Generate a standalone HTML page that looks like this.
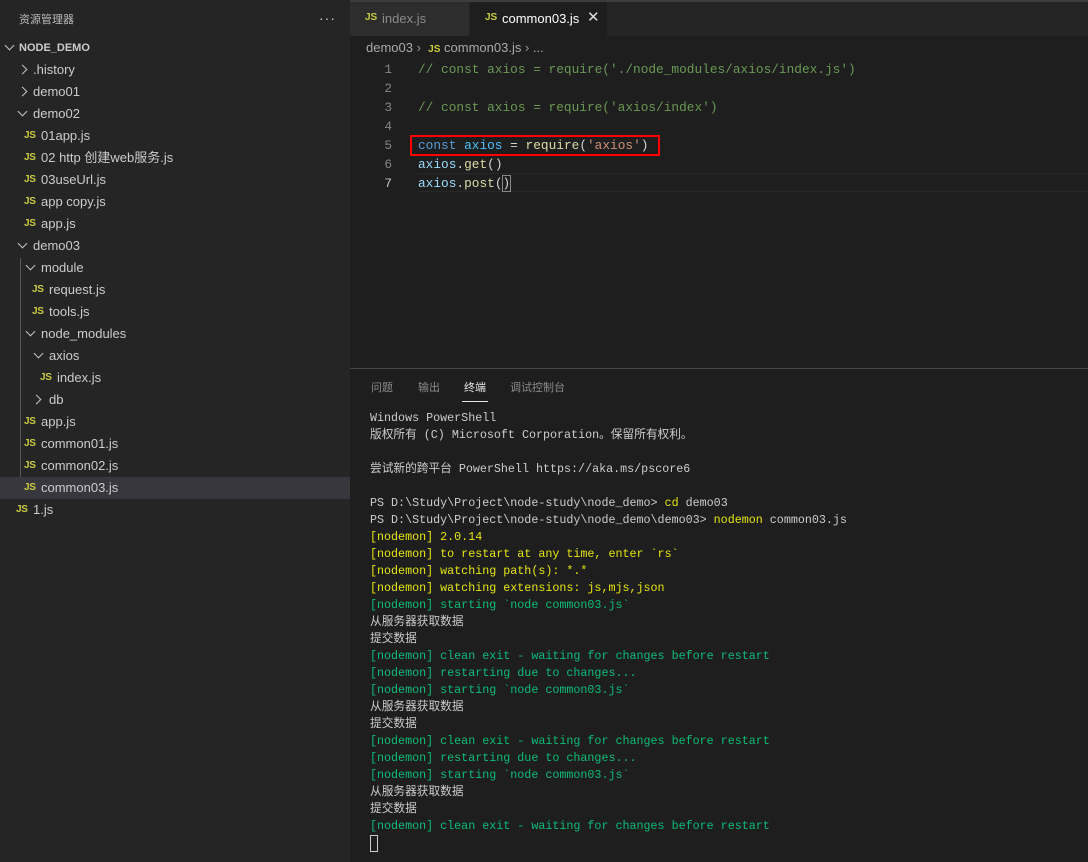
<!DOCTYPE html>
<html><head><meta charset="utf-8"><style>
*{margin:0;padding:0;box-sizing:border-box}
body{width:1088px;height:862px;background:#1e1e1e;position:relative;overflow:hidden;font-family:"Liberation Sans","Noto Sans CJK SC",sans-serif;color:#ccc;font-size:13px}
.a{position:absolute;white-space:pre}
.side{position:absolute;left:0;top:0;width:350px;height:862px;background:#252526}
.row{position:absolute;height:22px;line-height:22px;font-size:13px;color:#ccc;white-space:pre}
.js{position:absolute;font-weight:bold;font-size:10px;color:#cbcb41;letter-spacing:-0.3px;top:0;line-height:22px}
.chev{position:absolute;top:7px;width:7px;height:7px;border-right:1.2px solid #c5c5c5;border-bottom:1.2px solid #c5c5c5}
.dn{transform:rotate(45deg);top:5px}
.rt{transform:rotate(-45deg)}
.code{position:absolute;font-family:"Liberation Mono",monospace;font-size:12.8px;line-height:19px;white-space:pre}
.term{position:absolute;left:370px;top:410px;font-family:"Liberation Mono","Noto Sans CJK SC",monospace;font-size:11.7px;line-height:17px;white-space:pre;color:#ccc}
.y{color:#e5e510}.g{color:#0dbc79}
</style></head><body>
<div class="a" style="left:0;top:0;width:1088px;height:2px;background:#3c3c3c"></div>
<div class="side">
<div class="a" style="left:19px;top:11px;font-size:11px;color:#bbb">资源管理器</div>
<div class="a" style="left:319px;top:10px;font-size:14px;color:#ccc;letter-spacing:1px">···</div>
<div class="row" style="left:0;top:37px;width:350px;font-weight:bold;font-size:11px"><span class="chev dn" style="left:6px"></span><span style="position:absolute;left:19px">NODE_DEMO</span></div>
<div class="a" style="left:20px;top:258px;width:1px;height:241px;background:#585858"></div>
<div class="row" style="left:0;top:477px;width:350px;height:22px;background:#37373d"></div>
<div class="row" style="top:59px;left:0"><span class="chev rt" style="left:19px"></span><span style="position:absolute;left:33px">.history</span></div>
<div class="row" style="top:81px;left:0"><span class="chev rt" style="left:19px"></span><span style="position:absolute;left:33px">demo01</span></div>
<div class="row" style="top:103px;left:0"><span class="chev dn" style="left:19px"></span><span style="position:absolute;left:33px">demo02</span></div>
<div class="row" style="top:125px;left:0;width:300px"><span class="js" style="left:24px">JS</span><span style="position:absolute;left:41px">01app.js</span></div>
<div class="row" style="top:147px;left:0;width:300px"><span class="js" style="left:24px">JS</span><span style="position:absolute;left:41px">02 http 创建web服务.js</span></div>
<div class="row" style="top:169px;left:0;width:300px"><span class="js" style="left:24px">JS</span><span style="position:absolute;left:41px">03useUrl.js</span></div>
<div class="row" style="top:191px;left:0;width:300px"><span class="js" style="left:24px">JS</span><span style="position:absolute;left:41px">app copy.js</span></div>
<div class="row" style="top:213px;left:0;width:300px"><span class="js" style="left:24px">JS</span><span style="position:absolute;left:41px">app.js</span></div>
<div class="row" style="top:235px;left:0"><span class="chev dn" style="left:19px"></span><span style="position:absolute;left:33px">demo03</span></div>
<div class="row" style="top:257px;left:0"><span class="chev dn" style="left:27px"></span><span style="position:absolute;left:41px">module</span></div>
<div class="row" style="top:279px;left:0;width:300px"><span class="js" style="left:32px">JS</span><span style="position:absolute;left:49px">request.js</span></div>
<div class="row" style="top:301px;left:0;width:300px"><span class="js" style="left:32px">JS</span><span style="position:absolute;left:49px">tools.js</span></div>
<div class="row" style="top:323px;left:0;width:300px"><span class="chev dn" style="left:27px"></span><span style="position:absolute;left:41px">node_modules</span></div>
<div class="row" style="top:345px;left:0"><span class="chev dn" style="left:35px"></span><span style="position:absolute;left:49px">axios</span></div>
<div class="row" style="top:367px;left:0;width:300px"><span class="js" style="left:40px">JS</span><span style="position:absolute;left:57px">index.js</span></div>
<div class="row" style="top:389px;left:0"><span class="chev rt" style="left:33px"></span><span style="position:absolute;left:49px">db</span></div>
<div class="row" style="top:411px;left:0;width:300px"><span class="js" style="left:24px">JS</span><span style="position:absolute;left:41px">app.js</span></div>
<div class="row" style="top:433px;left:0;width:300px"><span class="js" style="left:24px">JS</span><span style="position:absolute;left:41px">common01.js</span></div>
<div class="row" style="top:455px;left:0;width:300px"><span class="js" style="left:24px">JS</span><span style="position:absolute;left:41px">common02.js</span></div>
<div class="row" style="top:477px;left:0;width:300px"><span class="js" style="left:24px">JS</span><span style="position:absolute;left:41px">common03.js</span></div>
<div class="row" style="top:499px;left:0;width:300px"><span class="js" style="left:16px">JS</span><span style="position:absolute;left:33px">1.js</span></div>
</div>
<div class="a" style="left:350px;top:2px;width:738px;height:34px;background:#252526"></div>
<div class="a" style="left:350px;top:2px;width:119px;height:34px;background:#2d2d2d"></div>
<div class="a" style="left:470px;top:2px;width:137px;height:34px;background:#1e1e1e"></div>
<div class="a" style="left:365px;top:12px;font-size:10px;font-weight:bold;color:#cbcb41">JS</div>
<div class="a" style="left:382px;top:11px;color:#8b8b8b">index.js</div>
<div class="a" style="left:485px;top:12px;font-size:10px;font-weight:bold;color:#cbcb41">JS</div>
<div class="a" style="left:502px;top:11px;color:#fff">common03.js</div>
<div class="a" style="left:587px;top:8px;font-size:15px;color:#ddd">✕</div>
<div class="a" style="left:366px;top:40px;color:#a9a9a9">demo03 <span style="color:#999">›</span>  <span style="font-size:10px;font-weight:bold;color:#cbcb41">JS</span> common03.js <span style="color:#999">›</span> ...</div>
<div class="code" style="left:370px;top:60px;width:22px;text-align:right;color:#858585">1
2
3
4
5
6
<span style="color:#c6c6c6">7</span></div>
<div class="a" style="left:418px;top:173px;width:670px;height:19px;border-top:1px solid #282828;border-bottom:1px solid #282828"></div>
<div class="code" style="left:418px;top:60px;color:#d4d4d4"><span style="color:#6a9955">// const axios = require('./node_modules/axios/index.js')</span>

<span style="color:#6a9955">// const axios = require('axios/index')</span>

<span style="color:#569cd6">const</span> <span style="color:#4fc1ff">axios</span> = <span style="color:#dcdcaa">require</span>(<span style="color:#ce9178">'axios'</span>)
<span style="color:#9cdcfe">axios</span>.<span style="color:#dcdcaa">get</span>()
<span style="color:#9cdcfe">axios</span>.<span style="color:#dcdcaa">post</span>(<span style="outline:1px solid #888">)</span></div>
<div class="a" style="left:410px;top:135px;width:250px;height:21px;border:2px solid #f00"></div>
<div class="a" style="left:350px;top:368px;width:738px;height:1px;background:#444"></div>
<div class="a" style="left:371px;top:379px;font-size:11px;color:#8b8b8b">问题</div>
<div class="a" style="left:418px;top:379px;font-size:11px;color:#8b8b8b">输出</div>
<div class="a" style="left:464px;top:379px;font-size:11px;color:#e7e7e7">终端</div>
<div class="a" style="left:510px;top:379px;font-size:11px;color:#8b8b8b">调试控制台</div>
<div class="a" style="left:462px;top:401px;width:26px;height:1px;background:#e7e7e7"></div>
<div class="term">Windows PowerShell
版权所有 (C) Microsoft Corporation。保留所有权利。

尝试新的跨平台 PowerShell https://aka.ms/pscore6

PS D:\Study\Project\node-study\node_demo> <span class="y">cd</span> demo03
PS D:\Study\Project\node-study\node_demo\demo03> <span class="y">nodemon</span> common03.js
<span class="y">[nodemon] 2.0.14
[nodemon] to restart at any time, enter `rs`
[nodemon] watching path(s): *.*
[nodemon] watching extensions: js,mjs,json</span>
<span class="g">[nodemon] starting `node common03.js`</span>
从服务器获取数据
提交数据
<span class="g">[nodemon] clean exit - waiting for changes before restart
[nodemon] restarting due to changes...
[nodemon] starting `node common03.js`</span>
从服务器获取数据
提交数据
<span class="g">[nodemon] clean exit - waiting for changes before restart
[nodemon] restarting due to changes...
[nodemon] starting `node common03.js`</span>
从服务器获取数据
提交数据
<span class="g">[nodemon] clean exit - waiting for changes before restart</span>
</div>
<div class="a" style="left:370px;top:835px;width:8px;height:17px;border:1px solid #ccc"></div>
</body></html>
